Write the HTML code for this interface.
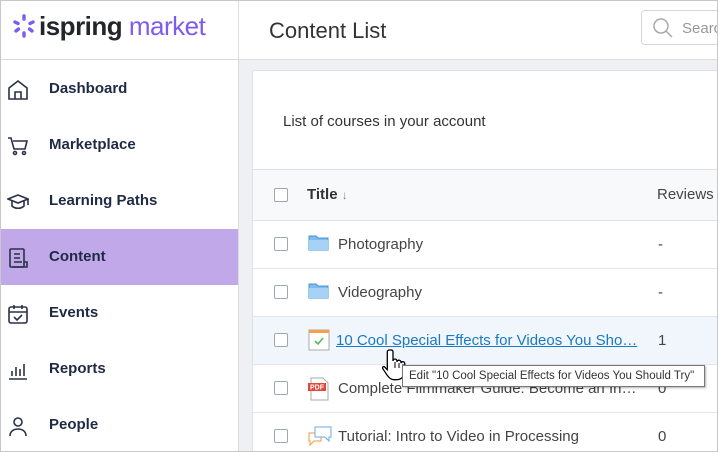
<!DOCTYPE html><html><head><style>
*{margin:0;padding:0;box-sizing:border-box}
html,body{width:718px;height:452px;overflow:hidden}
body{font-family:"Liberation Sans",sans-serif;background:#fff;position:relative}
.wrap{position:absolute;left:0;top:0;width:718px;height:452px;overflow:hidden}
.frame{position:absolute;left:0;top:0;width:718px;height:452px;border:1px solid #c8c8c8;pointer-events:none;z-index:10}
.sb{position:absolute;left:0;top:0;width:239px;height:452px;border-right:1px solid #dcdcdc;background:#fff}
.logo{position:absolute;left:12px;top:11px;font-size:26px;font-weight:bold;letter-spacing:-0.5px;white-space:nowrap}
.hdrl{position:absolute;left:0;top:59px;width:239px;height:1px;background:#dcdcdc}
.it{position:absolute;left:0;width:238px;height:56px;font-size:15px;font-weight:bold;color:#1f2a44;line-height:56px;padding-left:49px}
.it svg{position:absolute;left:7px;top:18px}
.act{background:#c1a8e9}
.main{position:absolute;left:239px;top:0;right:0;bottom:0;background:#eef0f3;overflow:hidden}
.top{position:absolute;left:0;top:0;right:0;height:60px;background:#fff;border-bottom:1px solid #dcdcdc}
.top h1{position:absolute;left:30px;top:18px;font-weight:normal;font-size:22px;color:#333}
.srch{position:absolute;left:402px;top:10px;width:90px;height:35px;border:1px solid #d6d6d6;border-radius:4px;color:#999;font-size:15px;padding:9px 0 0 40px}
.card{position:absolute;left:13px;top:70px;right:0;bottom:0;background:#fff;border:1px solid #dde2e8;border-right:none;border-bottom:none;border-radius:3px 0 0 0;overflow:hidden}
.sub{position:absolute;left:30px;top:42px;font-size:15px;color:#333}
.th{position:absolute;left:0;right:0;top:98px;height:52px;background:#f7f9fb;border-top:1px solid #dde2e8;border-bottom:1px solid #dde2e8}
.cb{position:absolute;left:21px;width:14px;height:14px;border:1px solid #9aa;border-radius:2px;background:#fff}
.row{position:absolute;left:0;right:0;height:48px;border-bottom:1px solid #e2e6ea;font-size:15px;color:#444}
.row .t{position:absolute;left:85px;top:15px;white-space:nowrap}
.row .r{position:absolute;left:405px;top:15px}
.row .cb{top:16px}
.ic{position:absolute;left:55px;top:12px}
</style></head><body><div class="wrap">
<div class="frame"></div>
<div class="sb">
<div class="logo"><svg width="24" height="24" viewBox="0 0 24 24" style="vertical-align:-3px;margin-right:3px"><g stroke="#7c5cf0" stroke-width="3.4" stroke-linecap="round"><line x1="12" y1="2" x2="12" y2="5"/><line x1="12" y1="19" x2="12" y2="22"/><line x1="3" y1="8" x2="6" y2="9.5"/><line x1="21" y1="8" x2="18" y2="9.5"/><line x1="4" y1="17" x2="6.5" y2="15"/><line x1="20" y1="17" x2="17.5" y2="15"/></g></svg><span style="color:#23252b">ispring</span><span style="color:#7c5cf0;font-weight:normal"> market</span></div>
<div class="hdrl"></div>
<div class="it" style="top:61px"><svg width="22" height="22" viewBox="0 0 22 22" fill="none" stroke="#2a3148" stroke-width="1.6"><path d="M2 9L11 2l9 7v11H2z"/><path d="M8 20v-7h6v7"/></svg>Dashboard</div>
<div class="it" style="top:117px"><svg width="22" height="22" viewBox="0 0 22 22" fill="none" stroke="#2a3148" stroke-width="1.6"><path d="M1 3h3l3 11h11l2-8H6"/><circle cx="8" cy="18" r="1.5"/><circle cx="17" cy="18" r="1.5"/></svg>Marketplace</div>
<div class="it" style="top:173px"><svg width="22" height="22" viewBox="0 0 22 22" fill="none" stroke="#2a3148" stroke-width="1.6"><path d="M1 8l10-4 10 4-10 4z"/><path d="M5 10v5c3 3 9 3 12 0v-5M21 8v6"/></svg>Learning Paths</div>
<div class="it act" style="top:229px"><svg width="22" height="22" viewBox="0 0 22 22" fill="none" stroke="#2a3148" stroke-width="1.6"><rect x="3" y="2" width="14" height="18" rx="1"/><path d="M7 7h6M7 11h6M7 15h8M17 15h3v5H5"/></svg>Content</div>
<div class="it" style="top:285px"><svg width="22" height="22" viewBox="0 0 22 22" fill="none" stroke="#2a3148" stroke-width="1.6"><rect x="2" y="4" width="18" height="16" rx="2"/><path d="M2 9h18M7 2v4M15 2v4M7 14l3 3 5-5"/></svg>Events</div>
<div class="it" style="top:341px"><svg width="22" height="22" viewBox="0 0 22 22" fill="none" stroke="#2a3148" stroke-width="1.6"><path d="M2 20h18M5 17v-5M9 17V8M13 17v-7M17 17V5"/></svg>Reports</div>
<div class="it" style="top:397px"><svg width="22" height="22" viewBox="0 0 22 22" fill="none" stroke="#2a3148" stroke-width="1.6"><circle cx="11" cy="7" r="4"/><path d="M3 21c0-5 4-7 8-7s8 2 8 7"/></svg>People</div>
</div>
<div class="main">
<div class="top"><h1>Content List</h1><div class="srch"><svg width="22" height="22" viewBox="0 0 22 22" style="position:absolute;left:10px;top:6px" fill="none" stroke="#aaa" stroke-width="1.5"><circle cx="9" cy="9" r="7"/><path d="M14 14l6 6"/></svg>Searc</div></div>
<div class="card">
<div class="sub">List of courses in your account</div>
<div class="th"><div class="cb" style="top:18px"></div><div style="position:absolute;left:54px;top:16px;font-size:15px;font-weight:bold;color:#333">Title <span style="font-weight:normal;font-size:12px;color:#888">↓</span></div><div style="position:absolute;left:404px;top:16px;font-size:15px;color:#444">Reviews</div></div>
<div class="row" style="top:150px"><div class="cb"></div><svg class="ic" width="22" height="20" viewBox="0 0 22 20"><path d="M1 3h7l2 2h10v12H1z" fill="#7fbcec" stroke="#4a90d0"/><path d="M1 7h19v10H1z" fill="#a6d3f5"/></svg><div class="t">Photography</div><div class="r">-</div></div>
<div class="row" style="top:198px"><div class="cb"></div><svg class="ic" width="22" height="20" viewBox="0 0 22 20"><path d="M1 3h7l2 2h10v12H1z" fill="#7fbcec" stroke="#4a90d0"/><path d="M1 7h19v10H1z" fill="#a6d3f5"/></svg><div class="t">Videography</div><div class="r">-</div></div>
<div class="row" style="top:246px;background:#f0f6fc"><div class="cb"></div><svg class="ic" width="22" height="22" viewBox="0 0 22 22"><rect x="1" y="1" width="20" height="20" fill="#fff" stroke="#aaa"/><rect x="1" y="1" width="20" height="3" fill="#f5a14a"/><path d="M7 12l3 3 5-6" stroke="#5bb55b" stroke-width="1.6" fill="none"/></svg><div class="t" style="color:#1a7ac4;text-decoration:underline;left:83px">10 Cool Special Effects for Videos You Sho…</div><div class="r">1</div></div>
<div class="row" style="top:294px"><div class="cb"></div><svg class="ic" width="22" height="24" viewBox="0 0 22 24"><path d="M3 1h12l5 5v17H3z" fill="#fff" stroke="#aaa"/><rect x="0" y="6" width="18" height="8" fill="#e0483a"/><text x="2" y="12.5" font-size="7" fill="#fff" font-family="Liberation Sans" font-weight="bold">PDF</text></svg><div class="t">Complete Filmmaker Guide: Become an In…</div><div class="r">0</div></div>
<div class="row" style="top:342px"><div class="cb"></div><svg class="ic" width="24" height="22" viewBox="0 0 24 22" fill="#fff"><path d="M1 8h12v8H6l-4 4v-4H1z" stroke="#f09a40"/><path d="M7 2h16v10h-2v4l-4-4H7z" stroke="#6aabe0"/></svg><div class="t">Tutorial: Intro to Video in Processing</div><div class="r">0</div></div>
</div>
</div>
<svg style="position:absolute;left:381px;top:348px" width="28" height="34" viewBox="0 0 28 34"><path d="M10 2c1.5 0 2 1 2 2v9c0-1 1-2 2-2s2 1 2 2v1c0-1 1-1.8 2-1.8s2 1 2 2v1c0-1 1-1.5 2-1.5s1.8 1 1.8 2v7c0 5-3 9-8 9h-3c-3 0-5-2-7-5l-4-6c-.7-1 .2-2.5 1.5-2l3 3V4c0-1 .5-2 2-2z" fill="#fff" stroke="#000" stroke-width="1.3"/><path d="M14 14v6M18 15v5M22 16v4" stroke="#000"/></svg>
<div style="position:absolute;left:402px;top:365px;width:303px;height:22px;background:#fff;border:1px solid #777;box-shadow:1px 1px 2px rgba(0,0,0,.3);font-size:11.5px;color:#333;padding:4px 0 0 6px;white-space:nowrap;overflow:hidden">Edit "10 Cool Special Effects for Videos You Should Try"</div>
</div></body></html>
